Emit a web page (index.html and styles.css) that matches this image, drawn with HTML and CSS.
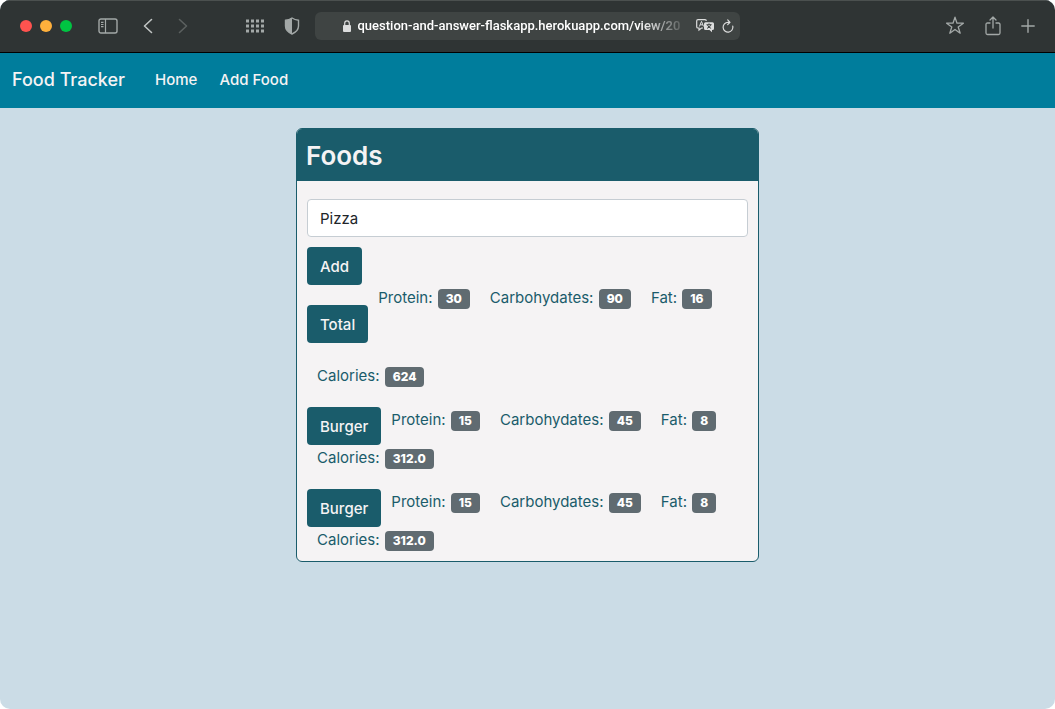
FILE: index.html
```html
<!DOCTYPE html>
<html lang="en">
<head>
<meta charset="utf-8">
<title>Food Tracker</title>
<link rel="stylesheet" href="styles.css">
</head>
<body>
<div class="window">
  <header class="toolbar">
    <div class="toolbar-left">
      <div class="lights"><span class="light red"></span><span class="light amber"></span><span class="light green"></span></div>
      <button class="icon-btn sidebar-btn" aria-label="Sidebar"><svg width="20" height="16" viewBox="0 0 20 16" fill="none" stroke="currentColor"><rect x="1" y="1" width="18" height="14" rx="2" stroke-width="1.4"/><path d="M7.5 1v14M3 4.3h2.500M3 6.500h2.500M3 8.700h2.500" stroke-width="1.2"/></svg></button>
      <button class="icon-btn back-btn" aria-label="Back"><svg width="10" height="16" viewBox="0 0 10 16" fill="none" stroke="currentColor" stroke-width="1.6" stroke-linecap="round" stroke-linejoin="round"><path d="M8.500 1.500 1.500 8l7 6.500"/></svg></button>
      <button class="icon-btn forward-btn" aria-label="Forward" disabled><svg width="10" height="16" viewBox="0 0 10 16" fill="none" stroke="currentColor" stroke-width="1.6" stroke-linecap="round" stroke-linejoin="round"><path d="m1.500 1.500 7 6.500-7 6.500"/></svg></button>
      <button class="icon-btn" aria-label="Start page"><svg width="20" height="14" viewBox="0 0 20 14" fill="none" stroke="currentColor" stroke-width="3" stroke-dasharray="3 2"><path d="M1 2h18M1 7h18M1 12h18"/></svg></button>
    </div>
    <div class="toolbar-center">
      <button class="icon-btn" aria-label="Privacy report"><svg width="16" height="18" viewBox="0 0 16 18"><path d="M8 1C6 2.300 3.800 3 1.500 3.300V9c0 3.900 3 6.400 6.500 8 3.500-1.600 6.500-4.100 6.500-8V3.300C12.200 3 10 2.300 8 1Z" fill="none" stroke="currentColor" stroke-width="1.4"/><path d="M8 1C6 2.300 3.800 3 1.500 3.300V9c0 3.900 3 6.400 6.500 8Z" fill="currentColor"/></svg></button>
      <div class="address">
        <svg class="lock" width="8" height="12" viewBox="0 0 8 12"><rect y="5" width="8" height="7" rx="1" fill="currentColor"/><path d="M1.700 5.500V3.200a2.300 2.300 0 0 1 4.600 0v2.300" fill="none" stroke="currentColor" stroke-width="1.200"/></svg>
        <span class="url">question-and-answer-flaskapp.herokuapp.com/view/20</span>
        <button class="icon-btn" aria-label="Translate"><svg width="19" height="14" viewBox="0 0 19 14"><path d="M7 9H5.500L3 11V9H2Q.7 9 .7 7.700V2Q.7.700 2 .700h7Q10.300.700 10.300 2" fill="none" stroke="currentColor" stroke-width="1.200"/><path d="M3.400 7.500 5.500 2.400l2 5M4.200 5.800h2.700" fill="none" stroke="currentColor"/><path d="M9.500 3.200h7Q18 3.200 18 4.700v4.800Q18 11 16.500 11H16v2.300L13.500 11h-4Q8 11 8 9.500V4.700Q8 3.200 9.500 3.200Z" fill="currentColor"/><path d="M10.500 5.700h5M13 4.400v1.300M14.800 5.700q-.8 2.600-3.800 3.700M11.500 6q.8 2.300 3.600 3.400" fill="none" stroke="#3f4443"/></svg></button>
        <button class="icon-btn" aria-label="Reload"><svg width="12" height="14" viewBox="0 0 12 14" fill="none" stroke="currentColor" stroke-width="1.200" stroke-linecap="round" stroke-linejoin="round"><path d="M10.800 7.200A4.900 4.900 0 1 1 6 3.300h1.500M5.700.900 8 3.300 5.700 5.600"/></svg></button>
      </div>
    </div>
    <div class="toolbar-right">
      <button class="icon-btn" aria-label="Bookmark"><svg width="20" height="19" viewBox="0 0 20 19" fill="none" stroke="currentColor" stroke-width="1.300" stroke-linejoin="round"><path d="m10 1.200 2 6h6.400l-5.200 3.800 2 6.200L10 13.400l-5.200 3.800 2-6.200L1.600 7.200H8Z"/></svg></button>
      <button class="icon-btn" aria-label="Share"><svg width="16" height="20" viewBox="0 0 16 20" fill="none" stroke="currentColor" stroke-width="1.300" stroke-linecap="round" stroke-linejoin="round"><path d="M5 7H2.500Q1 7 1 8.500V17Q1 18.500 2.500 18.500h11q1.500 0 1.500-1.500V8.500Q15 7 13.500 7H11M8 12V1.200M5 4l3-3 3 3"/></svg></button>
      <button class="icon-btn" aria-label="New tab"><svg width="14" height="14" viewBox="0 0 14 14" fill="none" stroke="currentColor" stroke-width="1.400" stroke-linecap="round"><path d="M7 .800v12.400M.800 7h12.400"/></svg></button>
    </div>
  </header>
  <nav class="navbar">
    <a class="brand" href="#">Food Tracker</a>
    <a class="nav-link" href="#">Home</a>
    <a class="nav-link" href="#">Add Food</a>
  </nav>
  <main class="page">
    <section class="card">
      <h1 class="card-title">Foods</h1>
      <div class="card-body">
        <input class="field" type="text" value="Pizza" aria-label="Food">
        <div class="entry entry-total">
          <div class="actions">
            <button class="btn">Add</button>
            <button class="btn">Total</button>
          </div>
          <div class="stats">
            <span class="stat">Protein: <span class="badge">30</span></span>
            <span class="stat">Carbohydates: <span class="badge">90</span></span>
            <span class="stat">Fat: <span class="badge">16</span></span>
          </div>
        </div>
        <div class="calories calories-total"><span class="stat">Calories: <span class="badge">624</span></span></div>
        <div class="entry">
          <button class="btn">Burger</button>
          <div class="stats">
            <span class="stat">Protein: <span class="badge">15</span></span>
            <span class="stat">Carbohydates: <span class="badge">45</span></span>
            <span class="stat">Fat: <span class="badge">8</span></span>
          </div>
        </div>
        <div class="calories"><span class="stat">Calories: <span class="badge">312.0</span></span></div>
        <div class="entry">
          <button class="btn">Burger</button>
          <div class="stats">
            <span class="stat">Protein: <span class="badge">15</span></span>
            <span class="stat">Carbohydates: <span class="badge">45</span></span>
            <span class="stat">Fat: <span class="badge">8</span></span>
          </div>
        </div>
        <div class="calories"><span class="stat">Calories: <span class="badge">312.0</span></span></div>
      </div>
    </section>
  </main>
</div>
</body>
</html>
```
FILE: styles.css
```css
* { box-sizing: border-box; }
body { margin: 0; background: #fff; font: 16px/24px Inter, "Liberation Sans", sans-serif; }
button, input { font: inherit; }
a { color: inherit; text-decoration: none; }
svg { display: block; }

.window { min-height: 100vh; display: flex; flex-direction: column; border-radius: 10px; overflow: hidden; background: #cbdce6; }

.toolbar { height: 53px; display: grid; grid-template-columns: 1fr auto 1fr; align-items: center; padding-bottom: 2px; background: #2f3434; border-top: 1px solid #4b504f; border-bottom: 1px solid #000; color: #a3a8a7; }
.toolbar-left, .toolbar-center, .toolbar-right { display: flex; align-items: center; }
.toolbar-left { padding-left: 20px; }
.toolbar-right { justify-content: flex-end; gap: 20px; padding-right: 20px; }
.lights { display: flex; gap: 8px; margin-right: 26px; }
.light { width: 12px; height: 12px; border-radius: 50%; }
.red { background: #ff534f; }
.amber { background: #ffb03c; }
.green { background: #00c442; }
.icon-btn { display: block; padding: 0; border: 0; background: none; color: inherit; }
.sidebar-btn { margin-right: 25px; }
.back-btn { margin-right: 25px; color: #c0c4c3; }
.forward-btn { margin-right: 57px; color: #5b605f; }
.toolbar-center { gap: 15px; padding-right: 32px; }
.address { width: 425px; height: 28px; display: flex; align-items: center; gap: 7px; padding: 0 6px 0 28px; border-radius: 6px; background: #3f4443; color: #dcdddd; }
.url { flex: 1; min-width: 0; overflow: hidden; white-space: nowrap; color: #fff; font-family: Roboto, Inter, sans-serif; font-size: 13px; font-weight: 500; line-height: 20px; mask-image: linear-gradient(to right, #000 85%, transparent 100%); }

.navbar { height: 55px; display: flex; align-items: center; gap: 22px; padding: 0 12px 2px; background: #007d9c; color: #f5f3f4; font-weight: 500; font-size: 15px; }
.brand { margin-right: 8px; font-size: 18px; }

.page { padding: 20px; }
.card { max-width: 463px; margin: 0 auto; border: 1px solid #1a5c6b; border-radius: 6px; overflow: hidden; background: #f5f3f4; color: #1a5c6b; font-size: 15px; }
.card-title { margin: 0; padding: 12px 9px 10px; background: #1a5c6b; color: #f5f3f4; font-size: 26px; line-height: 30px; font-weight: 600; }
.card-body { padding: 18px 10px 9px; }
.field { display: block; width: 100%; height: 38px; padding: 0 12px; border: 1px solid #c6cdd3; border-radius: 4px; background: #fff; color: #212529; }
.entry { display: flex; align-items: flex-start; gap: 10px; margin-top: 19px; }
.entry-total { align-items: center; margin-top: 10px; }
.actions { display: flex; flex-direction: column; align-items: flex-start; gap: 20px; }
.btn { height: 38px; padding: 1px 13px 0; border: 0; border-radius: 4px; background: #1a5c6b; color: #f5f3f4; font-weight: 500; }
.stats { display: flex; flex-wrap: wrap; gap: 0 20px; padding-top: 1px; }
.entry-total .stats { padding-top: 6px; }
.calories { padding: 0 10px; margin-top: 1px; }
.calories-total { margin-top: 21px; }
.stat { display: block; height: 24px; white-space: nowrap; }
.badge { display: inline-block; margin-left: 1px; padding: 4px 8px; border-radius: 4px; background: #606b71; color: #fff; font-size: 12px; line-height: 12px; font-weight: 800; }
```
